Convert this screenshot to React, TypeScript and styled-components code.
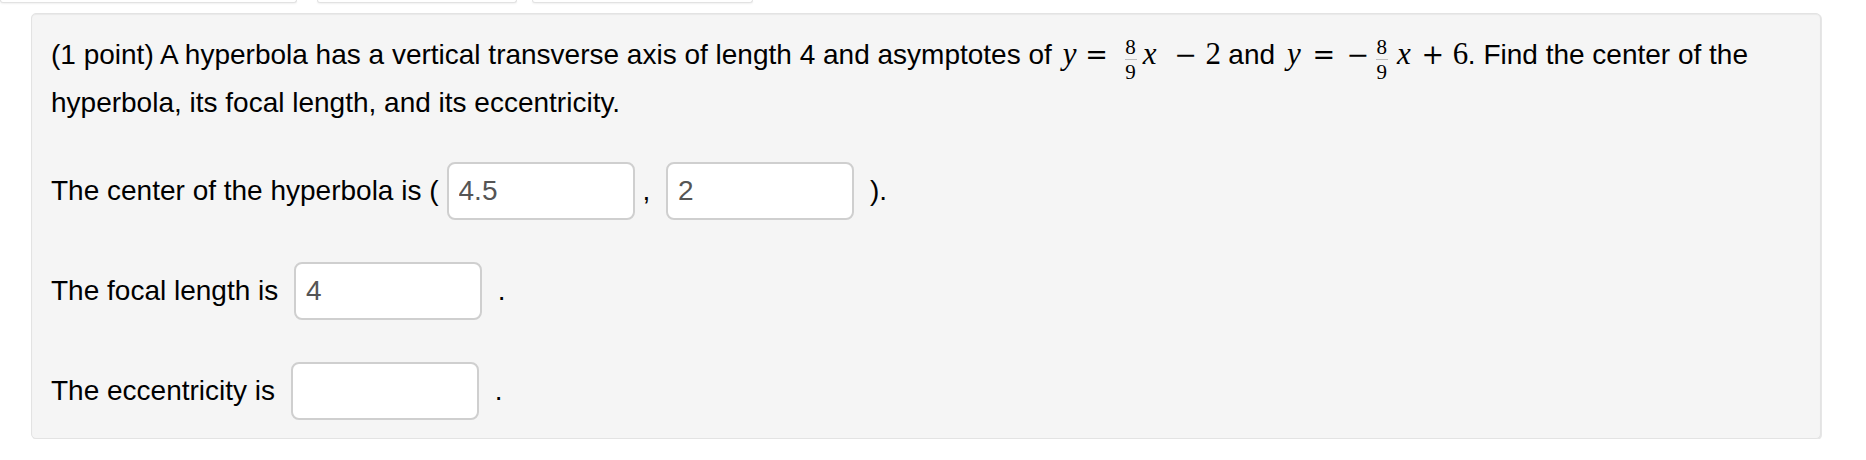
import React from 'react';
import styled, { createGlobalStyle } from 'styled-components';

const GlobalStyle = createGlobalStyle`
  html, body {
    margin: 0;
    padding: 0;
    background: #ffffff;
  }
  body {
    font-family: "Liberation Sans", Arial, Helvetica, sans-serif;
    color: #000000;
  }
`;

const Page = styled.div`
  width: 1866px;
  padding: 0 45px 0 31px;
  box-sizing: border-box;
`;

const TabStrip = styled.div`
  display: flex;
  height: 3px;
  margin-left: -31px;
  margin-bottom: 10px;
`;

const Tab = styled.div<{ $w: number; $gap: number }>`
  width: ${(p) => p.$w}px;
  margin-right: ${(p) => p.$gap}px;
  background: #ffffff;
  border: 1px solid #e2e2e2;
  border-top: none;
  border-radius: 0 0 6px 6px;
  box-shadow: 0 1px 2px rgba(0, 0, 0, 0.06);
`;

const Well = styled.div`
  background: #f5f5f5;
  border: 1px solid #e3e3e3;
  border-radius: 5px;
  box-shadow: inset 0 1px 1px rgba(0, 0, 0, 0.05), 1px 1px 0 #e6e6e6;
  padding: 17px 19px 18px;
  font-size: 28px;
`;

const Intro = styled.div`
  line-height: 48px;
  margin-bottom: 35px;
`;

const Row = styled.div<{ $last?: boolean }>`
  height: 58px;
  line-height: 58px;
  white-space: nowrap;
  margin-bottom: ${(p) => (p.$last ? 0 : 42)}px;
`;

const Answer = styled.input`
  box-sizing: border-box;
  width: 188px;
  height: 58px;
  margin: 0 8px;
  padding: 0 10px;
  vertical-align: top;
  background: #ffffff;
  border: 2px solid #cfcfcf;
  border-radius: 8px;
  font-family: "Liberation Sans", Arial, sans-serif;
  font-size: 28px;
  color: #555555;
  outline: none;
`;

const Math = styled.span`
  font-family: "Liberation Serif", "Times New Roman", serif;
  font-size: 31px;
  line-height: 1;
  white-space: nowrap;
`;

const Sym = styled.span<{ $italic?: boolean; $op?: boolean; $w: number; $l?: number }>`
  display: inline-block;
  width: ${(p) => p.$w}px;
  margin-left: ${(p) => p.$l ?? 0}px;
  text-align: center;
  font-style: ${(p) => (p.$italic ? 'italic' : 'normal')};
  font-family: ${(p) => (p.$op ? '"DejaVu Serif", serif' : 'inherit')};
  font-size: ${(p) => (p.$op ? '27px' : 'inherit')};
`;

const Frac = styled.span<{ $w: number; $l: number }>`
  display: inline-flex;
  flex-direction: column;
  align-items: center;
  width: ${(p) => p.$w}px;
  margin: 0 0 -6px ${(p) => p.$l}px;
  vertical-align: 10px;
  font-size: 21px;
  line-height: 16px;
`;

const Bar = styled.span`
  display: block;
  width: 12px;
  height: 1px;
  margin: 4px 0;
  background: rgba(0, 0, 0, 0.22);
`;

const Fraction = ({ n, d, w, l }: { n: string; d: string; w: number; l: number }) => (
  <Frac $w={w} $l={l}>
    <span>{n}</span>
    <Bar />
    <span>{d}</span>
  </Frac>
);

export default function App() {
  return (
    <>
      <GlobalStyle />
      <Page>
        <TabStrip>
          <Tab $w={295} $gap={20} />
          <Tab $w={198} $gap={15} />
          <Tab $w={219} $gap={0} />
        </TabStrip>
        <Well>
          <Intro>
            (1 point) A hyperbola has a vertical transverse axis of length 4 and asymptotes of{' '}
            <Math>
              <Sym $italic $w={16} $l={2}>y</Sym>
              <Sym $op $w={24} $l={7}>=</Sym>
              <Fraction n="8" d="9" w={16} l={14} />
              <Sym $italic $w={14} $l={4}>x</Sym>
              <Sym $op $w={24} $l={17}>−</Sym>
              <Sym $w={15} $l={8}>2</Sym>
            </Math>{' '}
            and{' '}
            <Math>
              <Sym $italic $w={16} $l={3}>y</Sym>
              <Sym $op $w={24} $l={10}>=</Sym>
              <Sym $op $w={24} $l={10}>−</Sym>
              <Fraction n="8" d="9" w={12} l={6} />
              <Sym $italic $w={14} $l={9}>x</Sym>
              <Sym $op $w={24} $l={10}>+</Sym>
              <Sym $w={15} $l={8}>6</Sym>
            </Math>
            . Find the center of the hyperbola, its focal length, and its eccentricity.
          </Intro>
          <Row>
            The center of the hyperbola is (
            <Answer defaultValue="4.5" />, <Answer defaultValue="2" /> ).
          </Row>
          <Row>
            The focal length is <Answer defaultValue="4" /> .
          </Row>
          <Row $last>
            The eccentricity is <Answer defaultValue="" /> .
          </Row>
        </Well>
      </Page>
    </>
  );
}
